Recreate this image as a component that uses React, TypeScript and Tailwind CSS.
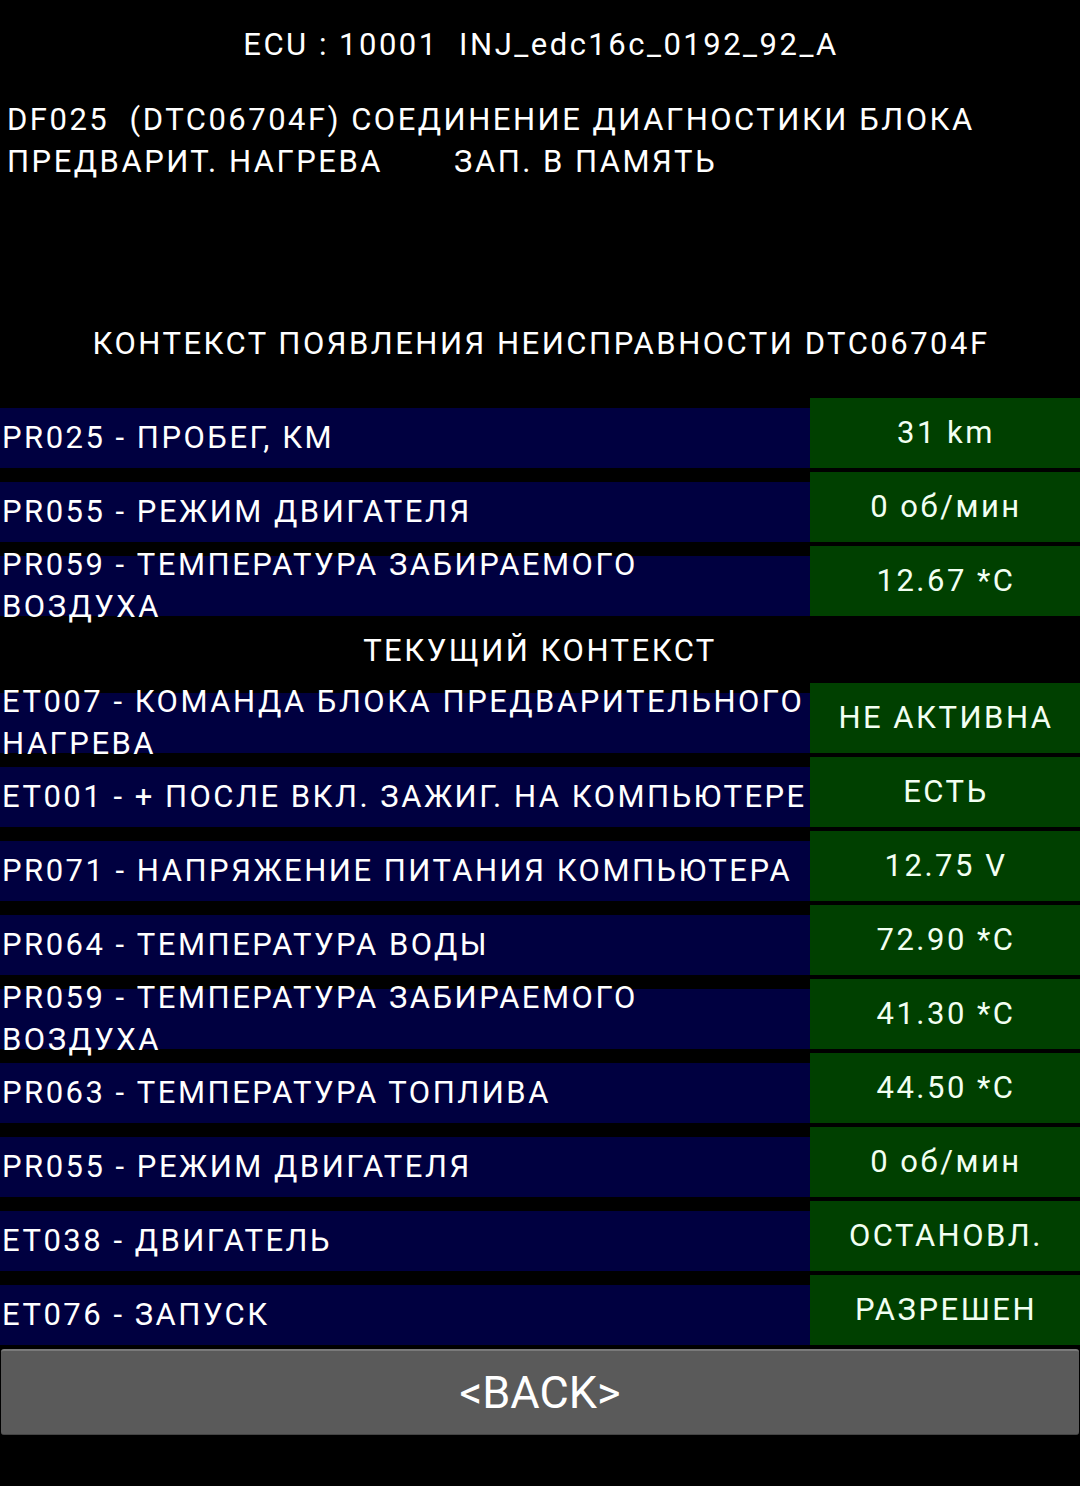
// DTC freeze-frame context screen

const freezeRows = [
  { label: "PR025 - ПРОБЕГ, КМ", value: "31 km" },
  { label: "PR055 - РЕЖИМ ДВИГАТЕЛЯ", value: "0 об/мин" },
  { label: "PR059 - ТЕМПЕРАТУРА ЗАБИРАЕМОГО\nВОЗДУХА", value: "12.67 *C" },
];

const currentRows = [
  { label: "ET007 - КОМАНДА БЛОКА ПРЕДВАРИТЕЛЬНОГО\nНАГРЕВА", value: "НЕ АКТИВНА" },
  { label: "ET001 - + ПОСЛЕ ВКЛ. ЗАЖИГ. НА КОМПЬЮТЕРЕ", value: "ЕСТЬ" },
  { label: "PR071 - НАПРЯЖЕНИЕ ПИТАНИЯ КОМПЬЮТЕРА", value: "12.75 V" },
  { label: "PR064 - ТЕМПЕРАТУРА ВОДЫ", value: "72.90 *C" },
  { label: "PR059 - ТЕМПЕРАТУРА ЗАБИРАЕМОГО\nВОЗДУХА", value: "41.30 *C" },
  { label: "PR063 - ТЕМПЕРАТУРА ТОПЛИВА", value: "44.50 *C" },
  { label: "PR055 - РЕЖИМ ДВИГАТЕЛЯ", value: "0 об/мин" },
  { label: "ET038 - ДВИГАТЕЛЬ", value: "ОСТАНОВЛ." },
  { label: "ET076 - ЗАПУСК", value: "РАЗРЕШЕН" },
];

const ParamRow = ({ label, value }: { label: string; value: string }) => (
  <div className="flex h-[70px] mb-[4px]">
    <div className="w-[810px] mt-[10px] h-[60px] bg-[#000040] flex items-center pl-[2px] overflow-visible">
      <span className="whitespace-pre leading-[42px] text-[31px] tracking-[2.5px]">{label}</span>
    </div>
    <div className="flex-1 h-[70px] bg-[#004000] flex items-center justify-center pl-[2px]">
      <span className="text-[31px] tracking-[2.5px] text-[#f2fff2] whitespace-nowrap">{value}</span>
    </div>
  </div>
);

export default function App() {
  return (
    <div
      className="w-[1080px] h-[1486px] bg-black text-white overflow-hidden"
      style={{ fontFamily: "Roboto, 'Noto Sans', sans-serif" }}
    >
      <div className="pt-[24px] pl-[2px] text-center text-[31px] tracking-[2.5px] leading-[42px] whitespace-pre">
        ECU : 10001  INJ_edc16c_0192_92_A
      </div>

      <div className="mt-[33px] pl-[7px] text-[31px] tracking-[2.5px] leading-[42px] whitespace-pre">
        DF025  (DTC06704F) СОЕДИНЕНИЕ ДИАГНОСТИКИ БЛОКА
        {"\n"}ПРЕДВАРИТ. НАГРЕВА<span className="ml-[71px]">ЗАП. В ПАМЯТЬ</span>
      </div>

      <div className="mt-[140px] pl-[2px] text-center text-[31px] tracking-[2.5px] leading-[42px] whitespace-pre">
        КОНТЕКСТ ПОЯВЛЕНИЯ НЕИСПРАВНОСТИ DTC06704F
      </div>

      <div className="mt-[33px]">
        {freezeRows.map((row, i) => (
          <ParamRow key={i} label={row.label} value={row.value} />
        ))}

        <div className="h-[63px] flex items-center justify-center text-[31px] tracking-[2.5px]">
          ТЕКУЩИЙ КОНТЕКСТ
        </div>

        {currentRows.map((row, i) => (
          <ParamRow key={i} label={row.label} value={row.value} />
        ))}
      </div>

      <button className="ml-[1px] w-[1078px] h-[86px] bg-[#5a5a5a] border-t-2 border-t-[#7a7a7a] border-b border-b-[#444] rounded-[3px] text-[45px] text-white flex items-center justify-center">
        &lt;BACK&gt;
      </button>
    </div>
  );
}
